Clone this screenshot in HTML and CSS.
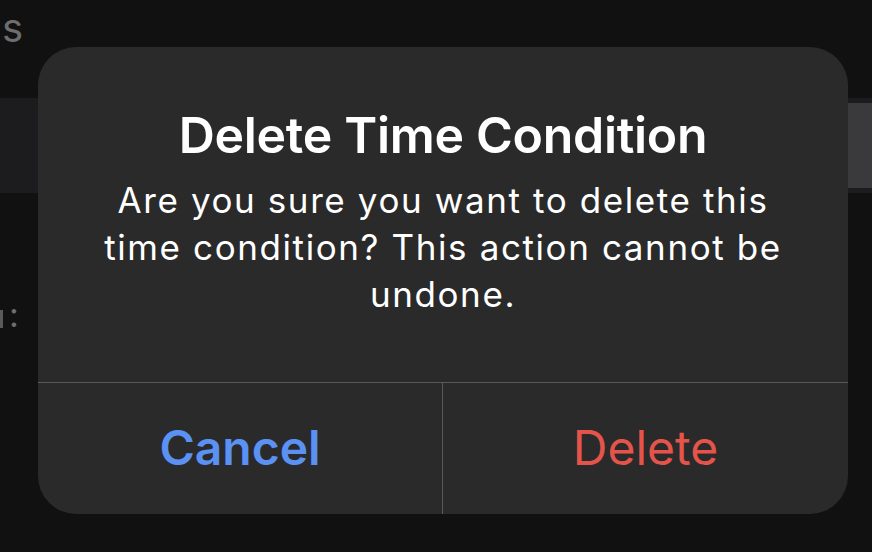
FILE: index.html
```html
<!DOCTYPE html>
<html>
<head>
<meta charset="utf-8">
<link rel="stylesheet" href="styles.css">
</head>
<body>
<div class="page">
  <div class="heading">s</div>
  <div class="band"><div class="field"></div></div>
  <div class="label"><span class="stem"></span>:</div>
</div>
<div class="alert">
  <div class="alert-content">
    <div class="alert-title">Delete Time Condition</div>
    <div class="alert-message">Are you sure you want to delete this time condition? This action cannot be undone.</div>
  </div>
  <div class="alert-actions">
    <div class="action cancel">Cancel</div>
    <div class="action destructive">Delete</div>
  </div>
</div>
</body>
</html>
```

FILE: styles.css
```css
html, body {
  margin: 0;
  padding: 0;
}
body {
  width: 872px;
  height: 552px;
  background: #111111;
  font-family: Inter, "Noto Sans", sans-serif;
  overflow: hidden;
  position: relative;
}
.page {
  display: flex;
  flex-direction: column;
}
.heading {
  height: 98px;
  box-sizing: border-box;
  padding: 0 0 0 2px;
  font-size: 40px;
  line-height: 56px;
  color: #6e6e6e;
}
.band {
  height: 95px;
  background: #1c1c1e;
  display: flex;
  justify-content: flex-end;
  align-items: center;
}
.field {
  width: 300px;
  height: 85px;
  background: #3a3a3c;
}
.label {
  margin-top: 102px;
  display: flex;
  align-items: center;
  gap: 6px;
  font-size: 34px;
  line-height: 40px;
  color: #6e6e6e;
}
.stem {
  width: 3px;
  height: 18px;
  margin-top: 8px;
  background: #5a5a5a;
}
.alert {
  position: absolute;
  left: 38px;
  top: 47px;
  width: 810px;
  height: 467px;
  border-radius: 38px;
  background: #2a2a2a;
  display: flex;
  flex-direction: column;
  overflow: hidden;
}
.alert-content {
  height: 335px;
  box-sizing: border-box;
  padding: 58px 58px 0;
  text-align: center;
  color: #ffffff;
}
.alert-title {
  font-size: 50px;
  line-height: 60px;
  font-weight: 600;
  letter-spacing: -0.3px;
}
.alert-message {
  margin-top: 12px;
  font-size: 35px;
  line-height: 47px;
  font-weight: 400;
  letter-spacing: 1.6px;
}
.alert-actions {
  flex: 1;
  display: grid;
  grid-template-columns: 405px 1fr;
  border-top: 1px solid #5a5a5a;
}
.action {
  display: flex;
  align-items: center;
  justify-content: center;
  font-size: 48px;
  padding-bottom: 2px;
}
.cancel {
  color: #5a91f2;
  font-weight: 600;
  border-right: 1px solid #5a5a5a;
}
.destructive {
  color: #e5544b;
  font-weight: 400;
}
```
